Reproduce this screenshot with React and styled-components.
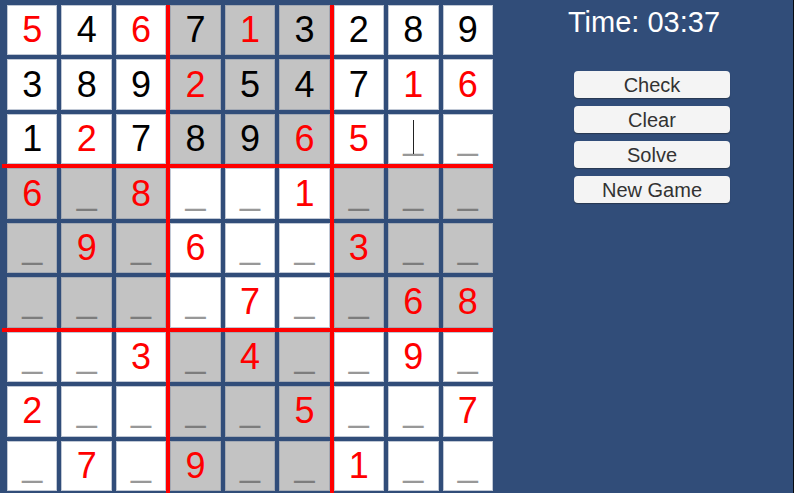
import React, { useState } from "react";
import styled, { createGlobalStyle } from "styled-components";

const GlobalStyle = createGlobalStyle`
    * {
        box-sizing: border-box;
    }

    body {
        margin: 0;
        background: #314d79;
        font-family: "Liberation Sans", Arial, sans-serif;
    }
`;

const Page = styled.main`
    display: grid;
    grid-template-columns: minmax(0, 486fr) minmax(0, 300fr);
    min-height: 100vh;
    padding-left: 7px;
    overflow: hidden;
    border-right: 1px solid #070b11;
`;

const Board = styled.div`
    position: relative;
    align-self: start;
    display: grid;
    grid-template-columns: repeat(9, minmax(0, 1fr));
    gap: 4px;
    margin-top: 5px;
`;

const Cell = styled.div`
    position: relative;
    aspect-ratio: 1;
    background: ${(props) => (props.$shaded ? "#c3c3c3" : "white")};
    border: 1px solid ${(props) => (props.$shaded ? "#a3a9b3" : "#c0c8d5")};
`;

const CellInput = styled.input`
    display: block;
    width: 100%;
    height: 100%;
    padding: 0;
    background: transparent;
    border: none;
    outline: none;
    caret-color: transparent;
    color: ${(props) => (props.$given ? "red" : "black")};
    font-family: inherit;
    font-size: 36px;
    line-height: 40px;
    text-align: center;

    &:placeholder-shown {
        padding-bottom: 4px;
    }

    &::placeholder {
        color: ${(props) => (props.$shaded ? "#7c7c7c" : "#989898")};
        opacity: 1;
    }
`;

const Caret = styled.span`
    position: absolute;
    top: 10%;
    left: 50%;
    width: 1px;
    height: 70%;
    background: #222;
    pointer-events: none;
`;

const ColumnLine = styled.div`
    position: absolute;
    top: 0;
    bottom: -4px;
    left: calc((100% + 4px) * ${(props) => props.$at} / 9 - 4px);
    width: 4px;
    background: red;
    pointer-events: none;
`;

const RowLine = styled.div`
    position: absolute;
    left: -5px;
    right: 0;
    top: calc((100% + 4px) * ${(props) => props.$at} / 9 - 4px);
    height: 4px;
    background: red;
    pointer-events: none;
`;

const SidePanel = styled.aside`
    display: flex;
    flex-direction: column;
    align-items: center;
    padding: 5px 0 0 18px;
`;

const Timer = styled.div`
    color: white;
    font-size: 29px;
    line-height: 34px;
    margin-bottom: 32px;
    padding-right: 16px;
`;

const Menu = styled.div`
    display: flex;
    flex-direction: column;
    gap: 8px;
    width: 156px;
`;

const MenuButton = styled.button`
    height: 27px;
    padding: 0;
    background: #f4f4f4;
    border: none;
    border-radius: 4px;
    box-shadow: 0 1px 1px #28384f;
    color: #323232;
    cursor: pointer;
    font-family: inherit;
    font-size: 20px;
    line-height: 26px;
`;

const givens = [
    "5.6.1....",
    "...2...16",
    ".2...65..",
    "6.8..1...",
    ".9.6..3..",
    "....7..68",
    "..3.4..9.",
    "2....5..7",
    ".7.9..1..",
];

const entries = [
    "546713289",
    "389254716",
    "1278965..",
    "6.8..1...",
    ".9.6..3..",
    "....7..68",
    "..3.4..9.",
    "2....5..7",
    ".7.9..1..",
];

const isShaded = (row, col) => (Math.floor(row / 3) + Math.floor(col / 3)) % 2 === 1;
const toGrid = (rows) => rows.map((row) => row.split("").map((c) => (c === "." ? "" : c)));

export default function App() {
    const [grid, setGrid] = useState(toGrid(entries));
    const [active, setActive] = useState("2-7");

    const changeCell = (row, col, value) => {
        if (!/^[1-9]?$/.test(value)) return;
        setGrid(grid.map((r, i) => r.map((c, j) => (i === row && j === col ? value : c))));
    };

    return (
        <>
            <GlobalStyle />
            <Page>
                <Board>
                    {grid.map((cells, row) =>
                        cells.map((value, col) => {
                            const key = `${row}-${col}`;
                            const given = givens[row][col] !== ".";
                            return (
                                <Cell key={key} $shaded={isShaded(row, col)}>
                                    <CellInput
                                        aria-label={`Row ${row + 1}, column ${col + 1}`}
                                        inputMode="numeric"
                                        maxLength={1}
                                        placeholder="_"
                                        value={value}
                                        readOnly={given}
                                        $given={given}
                                        $shaded={isShaded(row, col)}
                                        onFocus={() => setActive(key)}
                                        onChange={(e) => changeCell(row, col, e.target.value)}
                                    />
                                    {active === key && !value && <Caret />}
                                </Cell>
                            );
                        })
                    )}
                    <ColumnLine $at={3} />
                    <ColumnLine $at={6} />
                    <RowLine $at={3} />
                    <RowLine $at={6} />
                </Board>
                <SidePanel>
                    <Timer>Time: 03:37</Timer>
                    <Menu>
                        <MenuButton type="button">Check</MenuButton>
                        <MenuButton type="button" onClick={() => setGrid(toGrid(givens))}>
                            Clear
                        </MenuButton>
                        <MenuButton type="button">Solve</MenuButton>
                        <MenuButton type="button">New Game</MenuButton>
                    </Menu>
                </SidePanel>
            </Page>
        </>
    );
}
